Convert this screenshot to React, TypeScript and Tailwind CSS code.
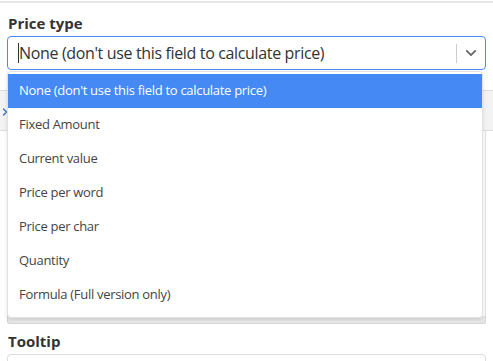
import React from "react";

const options = [
  "None (don't use this field to calculate price)",
  "Fixed Amount",
  "Current value",
  "Price per word",
  "Price per char",
  "Quantity",
  "Formula (Full version only)",
];

const Chevron: React.FC<{ className?: string }> = ({ className }) => (
  <svg viewBox="0 0 20 20" className={className} fill="none">
    <path d="M4 7l6 6 6-6" stroke="currentColor" strokeWidth="2.6" strokeLinecap="round" strokeLinejoin="round" />
  </svg>
);

const App: React.FC = () => {
  return (
    <div className="relative w-[493px] h-[361px] overflow-hidden bg-white text-[#333] font-['Open_Sans',sans-serif]">
      <div className="h-[3px] border-b-[2px] border-[#e6e6e6]" />

      {/* field: price type */}
      <div className="px-[7px] pt-[10px]">
        <label className="block pl-px text-[15px] font-bold leading-[20px] text-[#333]">Price type</label>
        <div className="mt-[3px] flex h-[34px] items-center rounded-[4px] border-[1.5px] border-[#4a8af4] bg-white">
          <div className="flex flex-1 items-center pl-[10px]">
            <span className="h-[20px] w-px bg-[#333]" />
            <span className="text-[16px] leading-none text-[#333] tracking-[-0.35px]">None (don't use this field to calculate price)</span>
          </div>
          <span className="h-[19px] w-px bg-[#ccc]" />
          <Chevron className="mx-[7px] h-[14px] w-[14px] text-[#666]" />
        </div>
      </div>

      {/* content under the open menu */}
      <div className="mt-[20px] h-[41px] border-y border-[#dcdcdc] bg-[#f3f3f3] relative">
        <Chevron className="absolute left-0 top-[16px] h-[10px] w-[10px] -rotate-90 text-[#3b6fb6]" />
      </div>
      <div className="mx-[7px] h-[185px] border-x border-[#e0e0e0]" />
      <div className="mx-[7px] h-[8px] rounded-b-[3px] border border-t-0 border-[#d5d5d5] bg-[#e9e9e9]" />

      <div className="px-[7px] pt-[7px]">
        <label className="block pl-px text-[15px] font-bold leading-[20px] text-[#333]">Tooltip</label>
        <div className="mt-[3px] h-[34px] rounded-[4px] border border-[#dcdcdc]" />
      </div>

      {/* open dropdown menu */}
      <div className="absolute left-[7px] top-[71px] w-[476px] h-[247px] rounded-[4px] border border-[#e2e2e2] bg-white pt-[2px] shadow-[0_2px_4px_rgba(0,0,0,0.12)]">
        {options.map((opt, i) => (
          <div
            key={opt}
            className={
              i === 0
                ? "flex h-[34px] items-center bg-[#4589f5] pl-[11px] text-[13px] tracking-[-0.3px] text-white"
                : "flex h-[34px] items-center pl-[11px] text-[13px] tracking-[-0.3px] text-[#444]"
            }
          >
            {opt}
          </div>
        ))}
      </div>
    </div>
  );
};

export default App;
